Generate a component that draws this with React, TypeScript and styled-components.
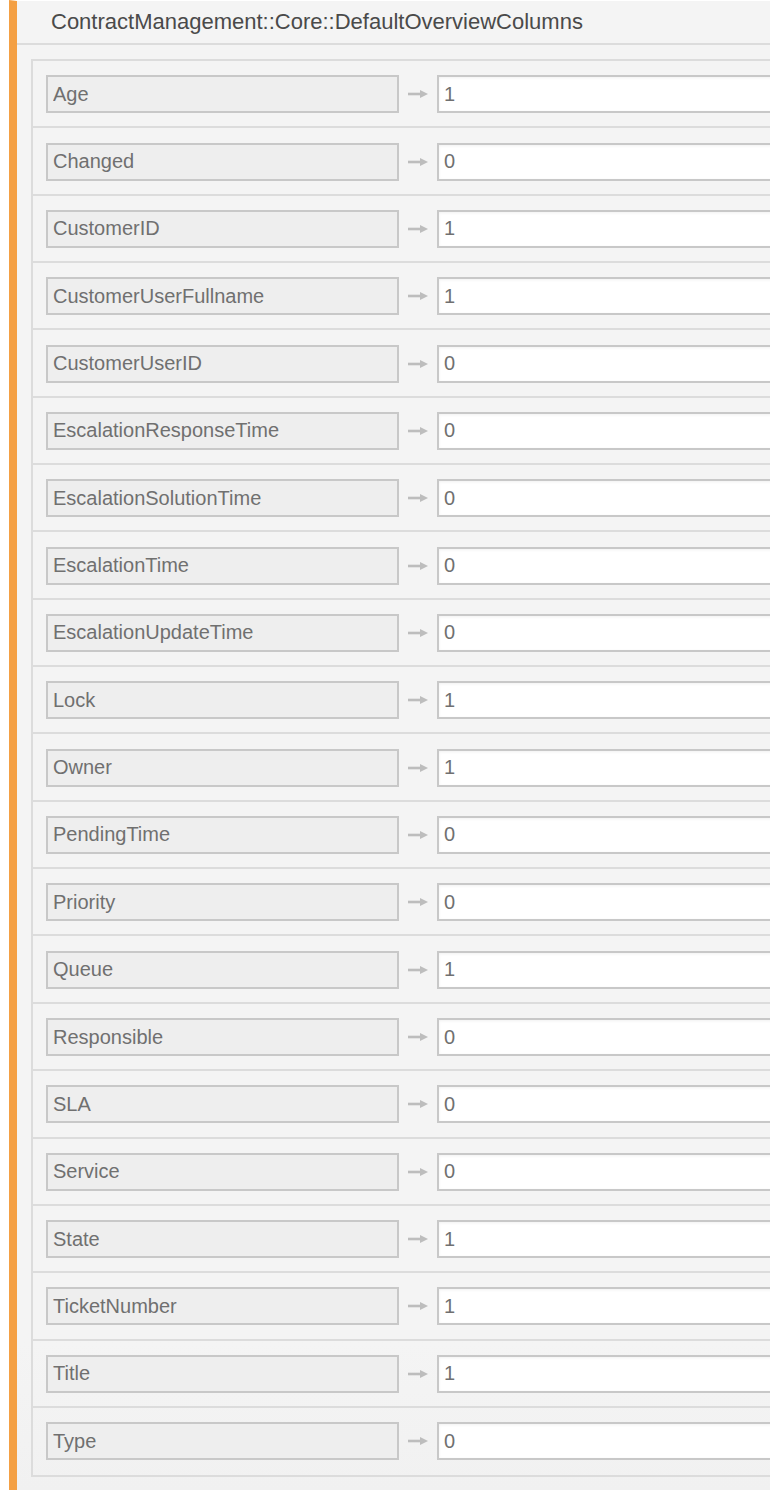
import { createGlobalStyle } from "styled-components";
import styled from "styled-components";

const GlobalStyle = createGlobalStyle`
  html, body {
    margin: 0;
    padding: 0;
    background: #fff;
  }
  body {
    font-family: "Liberation Sans", Arial, Helvetica, sans-serif;
  }
`;

const Page = styled.div`
  width: 770px;
  height: 1490px;
  padding-left: 9px;
  box-sizing: border-box;
  overflow: hidden;
`;

const Panel = styled.section`
  height: 100%;
  border-left: 8px solid #f4a044;
  border-top: 1px solid #fff;
  background: linear-gradient(180deg, #f4f4f4 0%, #f4f4f4 90%, #f1f1f1 100%);
  box-sizing: border-box;
`;

const Header = styled.h2`
  margin: 0;
  height: 42px;
  padding-left: 34px;
  display: flex;
  align-items: center;
  font-size: 22px;
  font-weight: normal;
  color: #4a4a4a;
  border-bottom: 2px solid #dcdcdc;
`;

const Body = styled.div`
  padding: 14px 0 0 14px;
`;

const List = styled.div`
  width: 900px;
  border: 2px solid #dcdcdc;
  border-right: none;
  padding-bottom: 2px;
`;

const Row = styled.div`
  display: flex;
  align-items: center;
  padding: 14.2px 0 13.17px 13px;
  border-bottom: 2px solid #dcdcdc;

  &:last-child {
    border-bottom: none;
  }
`;

const Field = styled.input<{ $key?: boolean }>`
  height: 38px;
  box-sizing: border-box;
  border: 2px solid #c8c8c8;
  border-radius: 0;
  padding: 0 5px;
  margin: 0;
  font-family: inherit;
  font-size: 20px;
  color: #707070;
  outline: none;
  background: ${(p) => (p.$key ? "#eeeeee" : "#ffffff")};
  width: ${(p) => (p.$key ? "353px" : "400px")};
  box-shadow: ${(p) => (p.$key ? "none" : "inset 0 1px 3px rgba(0,0,0,0.06)")};
`;

const Arrow = styled.span`
  width: 38px;
  display: flex;
  justify-content: center;
`;

const rows: [string, string][] = [
  ["Age", "1"],
  ["Changed", "0"],
  ["CustomerID", "1"],
  ["CustomerUserFullname", "1"],
  ["CustomerUserID", "0"],
  ["EscalationResponseTime", "0"],
  ["EscalationSolutionTime", "0"],
  ["EscalationTime", "0"],
  ["EscalationUpdateTime", "0"],
  ["Lock", "1"],
  ["Owner", "1"],
  ["PendingTime", "0"],
  ["Priority", "0"],
  ["Queue", "1"],
  ["Responsible", "0"],
  ["SLA", "0"],
  ["Service", "0"],
  ["State", "1"],
  ["TicketNumber", "1"],
  ["Title", "1"],
  ["Type", "0"],
];

const ArrowIcon = () => (
  <svg width="20" height="10" viewBox="0 0 20 10">
    <rect x="0" y="3.7" width="13" height="2.6" fill="#bdbdbd" />
    <path d="M12 1 L20 5 L12 9 Z" fill="#bdbdbd" />
  </svg>
);

const App = () => {
  return (
    <Page>
      <GlobalStyle />
      <Panel>
        <Header>ContractManagement::Core::DefaultOverviewColumns</Header>
        <Body>
          <List>
            {rows.map(([key, value]) => (
              <Row key={key}>
                <Field $key readOnly value={key} />
                <Arrow>
                  <ArrowIcon />
                </Arrow>
                <Field readOnly value={value} />
              </Row>
            ))}
          </List>
        </Body>
      </Panel>
    </Page>
  );
};

export default App;
